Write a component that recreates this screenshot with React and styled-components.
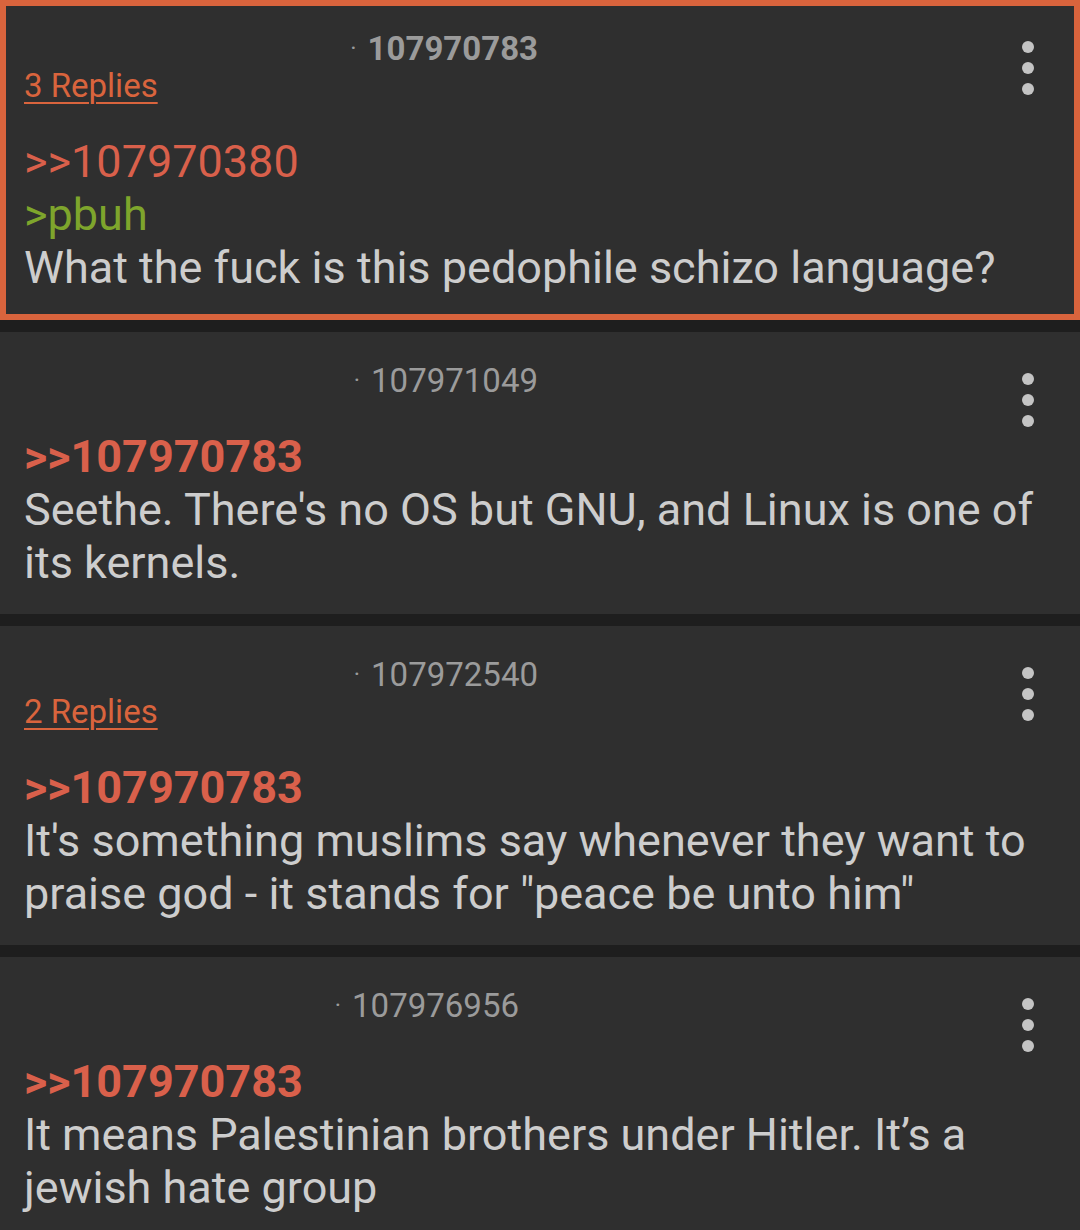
import React from 'react'
import styled, { createGlobalStyle } from 'styled-components'

const GlobalStyle = createGlobalStyle`
    html, body {
        margin: 0;
        padding: 0;
        background: #1e1e1e;
    }
    body {
        font-family: Roboto, "Noto Sans", "Liberation Sans", sans-serif;
        -webkit-font-smoothing: antialiased;
    }
`

const Thread = styled.div`
    width: 1080px;
    display: flex;
    flex-direction: column;
    gap: 12px;
    background: #1e1e1e;
`

const Post = styled.article`
    position: relative;
    background: #2f2f2f;
    box-sizing: border-box;
    padding: ${props => props.highlighted ? '24px 18px 20px 18px' : '30px 24px 25px 24px'};
    border: ${props => props.highlighted ? '6px solid #d9643d' : 'none'};
`

const Header = styled.div`
    width: ${props => props.numEnd}px;
    height: 37px;
    display: flex;
    justify-content: flex-end;
    font-size: 33px;
    line-height: 37px;
    color: #9b9b9b;
    font-weight: ${props => props.bold ? 700 : 400};
`

const Dot = styled.span`
    font-size: 24px;
    margin-right: 11px;
    font-weight: 400;
`

const Replies = styled.a`
    display: block;
    width: max-content;
    font-size: 33px;
    line-height: 37px;
    color: #d9643d;
    text-decoration: underline;
    text-decoration-thickness: 2px;
    text-underline-offset: 5px;
    margin-bottom: 3px;
`

const Body = styled.div`
    margin-top: 31px;
    padding-right: 20px;
    font-size: 45px;
    line-height: 53px;
    color: #cdcdcd;
`

const Quote = styled.div`
    color: #d9604b;
    font-weight: ${props => props.bold ? 700 : 400};
`

const Greentext = styled.div`
    color: #7ea52c;
`

const MenuButton = styled.button`
    position: absolute;
    top: ${props => props.highlighted ? '35px' : '41px'};
    right: ${props => props.highlighted ? '40px' : '46px'};
    width: 12px;
    padding: 0;
    border: none;
    background: none;
    display: flex;
    flex-direction: column;
    gap: 9px;
    span {
        width: 12px;
        height: 12px;
        border-radius: 50%;
        background: #c4c4c4;
    }
`

function PostMenu({ highlighted }) {
    return (
        <MenuButton highlighted={highlighted} aria-label="Post menu">
            <span />
            <span />
            <span />
        </MenuButton>
    )
}

const posts = [
    {
        no: '107970783',
        highlighted: true,
        numEnd: 514,
        replies: '3 Replies',
        quote: '>>107970380',
        quoteBold: false,
        green: '>pbuh',
        text: 'What the fuck is this pedophile schizo language?',
    },
    {
        no: '107971049',
        numEnd: 514,
        quote: '>>107970783',
        quoteBold: true,
        text: "Seethe. There's no OS but GNU, and Linux is one of its kernels.",
    },
    {
        no: '107972540',
        numEnd: 514,
        replies: '2 Replies',
        quote: '>>107970783',
        quoteBold: true,
        text: 'It\'s something muslims say whenever they want to praise god - it stands for "peace be unto him"',
    },
    {
        no: '107976956',
        numEnd: 495,
        quote: '>>107970783',
        quoteBold: true,
        text: 'It means Palestinian brothers under Hitler. It\u2019s a jewish hate group',
    },
]

export default function App() {
    return (
        <>
            <GlobalStyle />
            <Thread>
                {posts.map(p => (
                    <Post key={p.no} highlighted={p.highlighted}>
                        <Header numEnd={p.numEnd} bold={p.highlighted}>
                            <Dot>·</Dot>{p.no}
                        </Header>
                        {p.replies && <Replies>{p.replies}</Replies>}
                        <Body>
                            <Quote bold={p.quoteBold}>{p.quote}</Quote>
                            {p.green && <Greentext>{p.green}</Greentext>}
                            {p.text}
                        </Body>
                        <PostMenu highlighted={p.highlighted} />
                    </Post>
                ))}
            </Thread>
        </>
    )
}
